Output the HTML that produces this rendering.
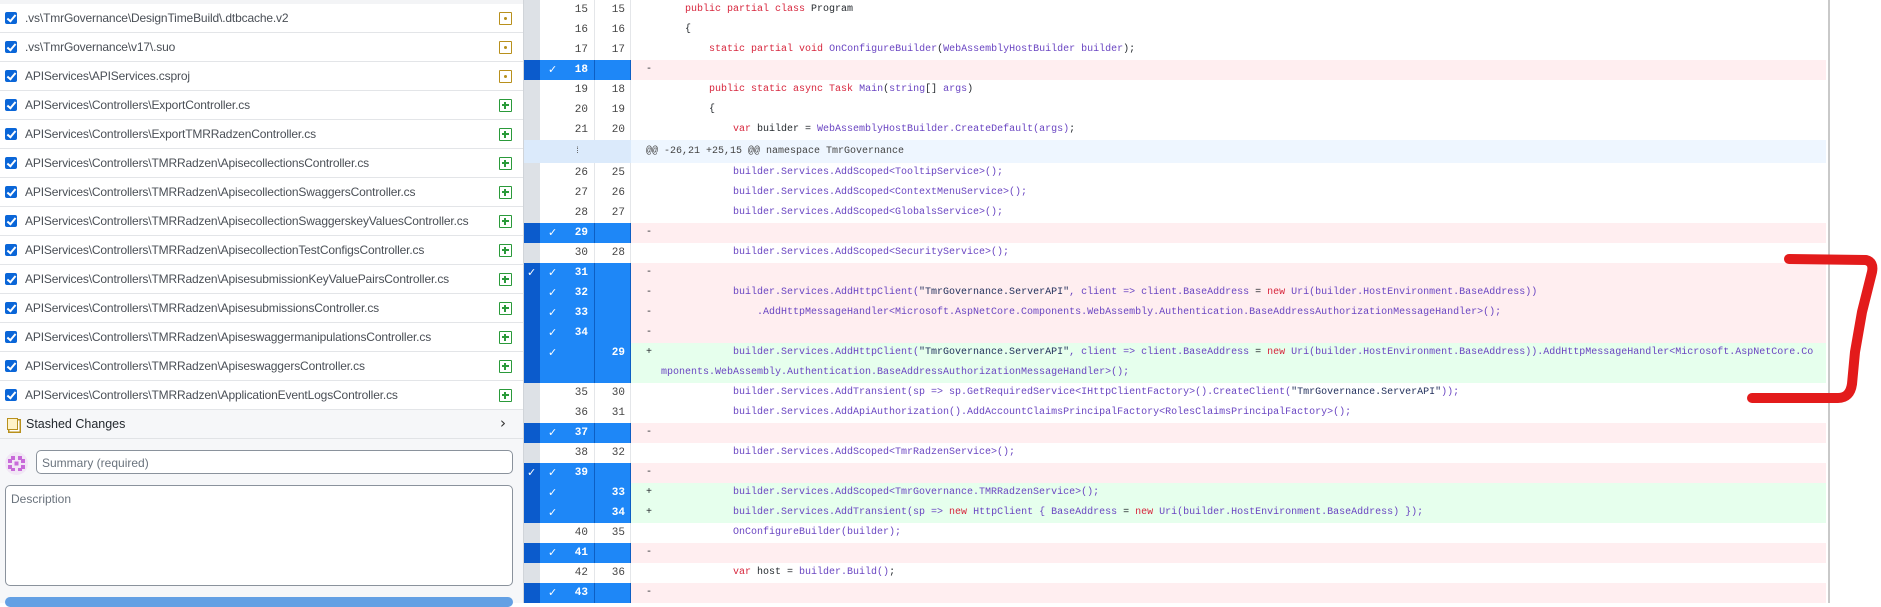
<!DOCTYPE html>
<html><head><meta charset="utf-8"><style>
*{box-sizing:border-box;margin:0;padding:0}
body{width:1881px;height:603px;overflow:hidden;background:#fff;position:relative;font-family:"Liberation Sans",sans-serif}
#left{position:absolute;left:0;top:0;width:524px;height:603px;background:#f6f7f9;border-right:1px solid #d0d4d9}
.fr{position:absolute;left:0;width:523px;height:29px;background:#fff;border-bottom:1px solid #e3e5e8}
.cb{position:absolute;left:5px;top:8px;width:12px;height:12px;background:#0a66d8;border-radius:2px}
.cb:after{content:"";position:absolute;left:3.5px;top:1px;width:3px;height:7px;border:solid #fff;border-width:0 2px 2px 0;transform:rotate(40deg)}
.fn{position:absolute;left:25px;top:7px;font-size:12px;color:#4a4f56;white-space:nowrap;letter-spacing:-0.15px}
.ic{position:absolute;left:499px;top:8px;width:13px;height:13px;border:1.5px solid;border-radius:1px}
.m{border-color:#b8901c}.m:after{content:"";position:absolute;left:3.5px;top:3.5px;width:3px;height:3px;border-radius:50%;background:#b8901c}
.a{border-color:#2a9a3a}.a:before{content:"";position:absolute;left:1.5px;top:4.3px;width:7px;height:1.5px;background:#2a9a3a}.a:after{content:"";position:absolute;left:4.3px;top:1.5px;width:1.5px;height:7px;background:#2a9a3a}
#diff{position:absolute;left:524px;top:0;width:1306px;height:603px;font-family:"Liberation Mono",monospace;font-size:10px}
.r{position:absolute;left:0;width:1302px;height:20px;line-height:20px}
.s{position:absolute;left:0;top:0;width:16px;height:100%;background:#dde1e6}
.c1{position:absolute;left:16px;top:0;width:55px;height:100%;background:#fff;border-right:1px solid #e4e6e9;text-align:right;padding-right:6px;color:#444;font-size:11px}
.c2{position:absolute;left:71px;top:0;width:36px;height:100%;background:#fff;border-right:1px solid #e4e6e9;text-align:right;padding-right:5px;color:#444;font-size:11px}
.ct{position:absolute;left:107px;top:0;right:0;height:100%;white-space:pre;color:#24292e}
.mk{position:absolute;left:15px}
.tx{position:absolute;left:30px}
.del .ct{background:#ffeef0}.add .ct{background:#e6ffed}
.sel .s{background:#0b5bcc}.sel .c1,.sel .c2{background:#1e87f7;color:#fff;font-weight:bold;border-right:1px solid #0d5fc4}
.ck{position:absolute;top:0;font-family:"DejaVu Sans",sans-serif;color:#fff;font-size:11px;font-weight:normal}
.k{color:#d7263d}.p{color:#6a45c2}.d{color:#24292e}.st{color:#1f2d5a}
</style></head><body>
<div id="left">
<div style="position:absolute;left:0;top:0;width:523px;height:4px;background:#f3f4f6"></div>
<div class="fr" style="top:4px"><div class="cb"></div><div class="fn">.vs\TmrGovernance\DesignTimeBuild\.dtbcache.v2</div><div class="ic m"></div></div>
<div class="fr" style="top:33px"><div class="cb"></div><div class="fn">.vs\TmrGovernance\v17\.suo</div><div class="ic m"></div></div>
<div class="fr" style="top:62px"><div class="cb"></div><div class="fn">APIServices\APIServices.csproj</div><div class="ic m"></div></div>
<div class="fr" style="top:91px"><div class="cb"></div><div class="fn">APIServices\Controllers\ExportController.cs</div><div class="ic a"></div></div>
<div class="fr" style="top:120px"><div class="cb"></div><div class="fn">APIServices\Controllers\ExportTMRRadzenController.cs</div><div class="ic a"></div></div>
<div class="fr" style="top:149px"><div class="cb"></div><div class="fn">APIServices\Controllers\TMRRadzen\ApisecollectionsController.cs</div><div class="ic a"></div></div>
<div class="fr" style="top:178px"><div class="cb"></div><div class="fn">APIServices\Controllers\TMRRadzen\ApisecollectionSwaggersController.cs</div><div class="ic a"></div></div>
<div class="fr" style="top:207px"><div class="cb"></div><div class="fn">APIServices\Controllers\TMRRadzen\ApisecollectionSwaggerskeyValuesController.cs</div><div class="ic a"></div></div>
<div class="fr" style="top:236px"><div class="cb"></div><div class="fn">APIServices\Controllers\TMRRadzen\ApisecollectionTestConfigsController.cs</div><div class="ic a"></div></div>
<div class="fr" style="top:265px"><div class="cb"></div><div class="fn">APIServices\Controllers\TMRRadzen\ApisesubmissionKeyValuePairsController.cs</div><div class="ic a"></div></div>
<div class="fr" style="top:294px"><div class="cb"></div><div class="fn">APIServices\Controllers\TMRRadzen\ApisesubmissionsController.cs</div><div class="ic a"></div></div>
<div class="fr" style="top:323px"><div class="cb"></div><div class="fn">APIServices\Controllers\TMRRadzen\ApiseswaggermanipulationsController.cs</div><div class="ic a"></div></div>
<div class="fr" style="top:352px"><div class="cb"></div><div class="fn">APIServices\Controllers\TMRRadzen\ApiseswaggersController.cs</div><div class="ic a"></div></div>
<div class="fr" style="top:381px"><div class="cb"></div><div class="fn">APIServices\Controllers\TMRRadzen\ApplicationEventLogsController.cs</div><div class="ic a"></div></div>
<div style="position:absolute;left:0;top:410px;width:523px;height:29px;background:#f6f7f9;border-bottom:1px solid #e1e3e6">
 <div style="position:absolute;left:7px;top:8px;width:11px;height:12px;border:1.5px solid #b8901c;background:#fff3c8;box-shadow:2px 2px 0 -0.5px #fff,2px 2px 0 1px #b8901c"></div>
 <div style="position:absolute;left:26px;top:7px;font-size:12.5px;color:#24292e">Stashed Changes</div>
 <div style="position:absolute;left:500px;top:4px;font-size:15px;color:#333;font-family:'DejaVu Sans',sans-serif">›</div>
</div>
<svg style="position:absolute;left:5px;top:452px" width="23" height="23" viewBox="0 0 23 23"><circle cx="11.5" cy="11.5" r="11.5" fill="#f1e6f5"/><g fill="#c86ad9"><rect x="6" y="4" width="4" height="4"/><rect x="13" y="4" width="4" height="4"/><rect x="3" y="7" width="4" height="4"/><rect x="16" y="7" width="4" height="4"/><rect x="9.5" y="9.5" width="4" height="4"/><rect x="3" y="13" width="4" height="4"/><rect x="16" y="13" width="4" height="4"/><rect x="6" y="16" width="4" height="3"/><rect x="13" y="16" width="4" height="3"/></g></svg>
<div style="position:absolute;left:36px;top:450px;width:477px;height:24px;border:1px solid #8a929c;border-radius:5px;background:#fff;font-size:12px;color:#6a737d;padding:5px 5px">Summary (required)</div>
<div style="position:absolute;left:5px;top:485px;width:508px;height:101px;border:1px solid #8a929c;border-radius:5px;background:#fff;font-size:12px;color:#6a737d;padding:6px 5px">Description</div>
<div style="position:absolute;left:5px;top:597px;width:508px;height:10px;border-radius:5px;background:#63a0e4"></div>
</div>

<div id="diff">
<div class="r" style="top:0"><div class="s"></div><div class="c1">15</div><div class="c2">15</div><div class="ct"><span class="tx">    <span class="k">public partial class</span> Program</span></div></div>
<div class="r" style="top:20px"><div class="s"></div><div class="c1">16</div><div class="c2">16</div><div class="ct"><span class="tx">    {</span></div></div>
<div class="r" style="top:40px"><div class="s"></div><div class="c1">17</div><div class="c2">17</div><div class="ct"><span class="tx">        <span class="k">static partial void</span> <span class="p">OnConfigureBuilder</span>(<span class="p">WebAssemblyHostBuilder builder</span>);</span></div></div>
<div class="r del sel" style="top:60px"><div class="s"></div><div class="c1"><span class="ck" style="left:8px">✓</span>18</div><div class="c2"></div><div class="ct"><span class="mk">-</span></div></div>
<div class="r" style="top:80px"><div class="s"></div><div class="c1">19</div><div class="c2">18</div><div class="ct"><span class="tx">        <span class="k">public static async Task</span> <span class="p">Main</span>(<span class="p">string</span>[] <span class="p">args</span>)</span></div></div>
<div class="r" style="top:100px"><div class="s"></div><div class="c1">20</div><div class="c2">19</div><div class="ct"><span class="tx">        {</span></div></div>
<div class="r" style="top:120px"><div class="s"></div><div class="c1">21</div><div class="c2">20</div><div class="ct"><span class="tx">            <span class="k">var</span> builder = <span class="p">WebAssemblyHostBuilder.CreateDefault(args)</span>;</span></div></div>
<div class="r" style="top:140px;height:23px;line-height:23px"><div class="s" style="background:#dbeafb"></div><div class="c1" style="background:#dbeafb;border:0;text-align:center;padding:0 0 0 20px;font-size:9px;color:#555">⁞</div><div class="c2" style="background:#dbeafb;border:0"></div><div class="ct" style="background:#eef6ff;color:#444"><span class="mk">@@ -26,21 +25,15 @@ namespace TmrGovernance</span></div></div>
<div class="r" style="top:163px"><div class="s"></div><div class="c1">26</div><div class="c2">25</div><div class="ct"><span class="tx p">            builder.Services.AddScoped&lt;TooltipService&gt;();</span></div></div>
<div class="r" style="top:183px"><div class="s"></div><div class="c1">27</div><div class="c2">26</div><div class="ct"><span class="tx p">            builder.Services.AddScoped&lt;ContextMenuService&gt;();</span></div></div>
<div class="r" style="top:203px"><div class="s"></div><div class="c1">28</div><div class="c2">27</div><div class="ct"><span class="tx p">            builder.Services.AddScoped&lt;GlobalsService&gt;();</span></div></div>
<div class="r del sel" style="top:223px"><div class="s"></div><div class="c1"><span class="ck" style="left:8px">✓</span>29</div><div class="c2"></div><div class="ct"><span class="mk">-</span></div></div>
<div class="r" style="top:243px"><div class="s"></div><div class="c1">30</div><div class="c2">28</div><div class="ct"><span class="tx p">            builder.Services.AddScoped&lt;SecurityService&gt;();</span></div></div>
<div class="r del sel" style="top:263px"><div class="s"><span class="ck" style="left:3px">✓</span></div><div class="c1"><span class="ck" style="left:8px">✓</span>31</div><div class="c2"></div><div class="ct"><span class="mk">-</span></div></div>
<div class="r del sel" style="top:283px"><div class="s"></div><div class="c1"><span class="ck" style="left:8px">✓</span>32</div><div class="c2"></div><div class="ct"><span class="mk">-</span><span class="tx p">            builder.Services.AddHttpClient(<span class="st">"TmrGovernance.ServerAPI"</span>, client =&gt; client.BaseAddress <span class="d">=</span> <span class="k">new</span> Uri(builder.HostEnvironment.BaseAddress))</span></div></div>
<div class="r del sel" style="top:303px"><div class="s"></div><div class="c1"><span class="ck" style="left:8px">✓</span>33</div><div class="c2"></div><div class="ct"><span class="mk">-</span><span class="tx p">                .AddHttpMessageHandler&lt;Microsoft.AspNetCore.Components.WebAssembly.Authentication.BaseAddressAuthorizationMessageHandler&gt;();</span></div></div>
<div class="r del sel" style="top:323px"><div class="s"></div><div class="c1"><span class="ck" style="left:8px">✓</span>34</div><div class="c2"></div><div class="ct"><span class="mk">-</span></div></div>
<div class="r add sel" style="top:343px;height:40px"><div class="s"></div><div class="c1"><span class="ck" style="left:8px">✓</span></div><div class="c2">29</div><div class="ct"><span class="mk">+</span><span class="tx p">            builder.Services.AddHttpClient(<span class="st">"TmrGovernance.ServerAPI"</span>, client =&gt; client.BaseAddress <span class="d">=</span> <span class="k">new</span> Uri(builder.HostEnvironment.BaseAddress)).AddHttpMessageHandler&lt;Microsoft.AspNetCore.Co</span><span class="tx p" style="top:20px">mponents.WebAssembly.Authentication.BaseAddressAuthorizationMessageHandler&gt;();</span></div></div>
<div class="r" style="top:383px"><div class="s"></div><div class="c1">35</div><div class="c2">30</div><div class="ct"><span class="tx p">            builder.Services.AddTransient(sp =&gt; sp.GetRequiredService&lt;IHttpClientFactory&gt;().CreateClient(<span class="st">"TmrGovernance.ServerAPI"</span>));</span></div></div>
<div class="r" style="top:403px"><div class="s"></div><div class="c1">36</div><div class="c2">31</div><div class="ct"><span class="tx p">            builder.Services.AddApiAuthorization().AddAccountClaimsPrincipalFactory&lt;RolesClaimsPrincipalFactory&gt;();</span></div></div>
<div class="r del sel" style="top:423px"><div class="s"></div><div class="c1"><span class="ck" style="left:8px">✓</span>37</div><div class="c2"></div><div class="ct"><span class="mk">-</span></div></div>
<div class="r" style="top:443px"><div class="s"></div><div class="c1">38</div><div class="c2">32</div><div class="ct"><span class="tx p">            builder.Services.AddScoped&lt;TmrRadzenService&gt;();</span></div></div>
<div class="r del sel" style="top:463px"><div class="s"><span class="ck" style="left:3px">✓</span></div><div class="c1"><span class="ck" style="left:8px">✓</span>39</div><div class="c2"></div><div class="ct"><span class="mk">-</span></div></div>
<div class="r add sel" style="top:483px"><div class="s"></div><div class="c1"><span class="ck" style="left:8px">✓</span></div><div class="c2">33</div><div class="ct"><span class="mk">+</span><span class="tx p">            builder.Services.AddScoped&lt;TmrGovernance.TMRRadzenService&gt;();</span></div></div>
<div class="r add sel" style="top:503px"><div class="s"></div><div class="c1"><span class="ck" style="left:8px">✓</span></div><div class="c2">34</div><div class="ct"><span class="mk">+</span><span class="tx p">            builder.Services.AddTransient(sp =&gt; <span class="k">new</span> HttpClient { BaseAddress <span class="d">=</span> <span class="k">new</span> Uri(builder.HostEnvironment.BaseAddress) });</span></div></div>
<div class="r" style="top:523px"><div class="s"></div><div class="c1">40</div><div class="c2">35</div><div class="ct"><span class="tx p">            OnConfigureBuilder(builder);</span></div></div>
<div class="r del sel" style="top:543px"><div class="s"></div><div class="c1"><span class="ck" style="left:8px">✓</span>41</div><div class="c2"></div><div class="ct"><span class="mk">-</span></div></div>
<div class="r" style="top:563px"><div class="s"></div><div class="c1">42</div><div class="c2">36</div><div class="ct"><span class="tx">            <span class="k">var</span> host = <span class="p">builder.Build()</span>;</span></div></div>
<div class="r del sel" style="top:583px"><div class="s"></div><div class="c1"><span class="ck" style="left:8px">✓</span>43</div><div class="c2"></div><div class="ct"><span class="mk">-</span></div></div>
</div>
<div style="position:absolute;left:1828px;top:0;width:2px;height:603px;background:#c9c9c9"></div>
<svg style="position:absolute;left:0;top:0" width="1881" height="603"><path d="M1789 259 L1866 260 Q1874 262 1872 272 L1862 312 L1855 352 L1852 384 Q1850 398 1838 398 L1752 398" fill="none" stroke="#e31b1b" stroke-width="10" stroke-linecap="round" stroke-linejoin="round"/></svg>
</body></html>
